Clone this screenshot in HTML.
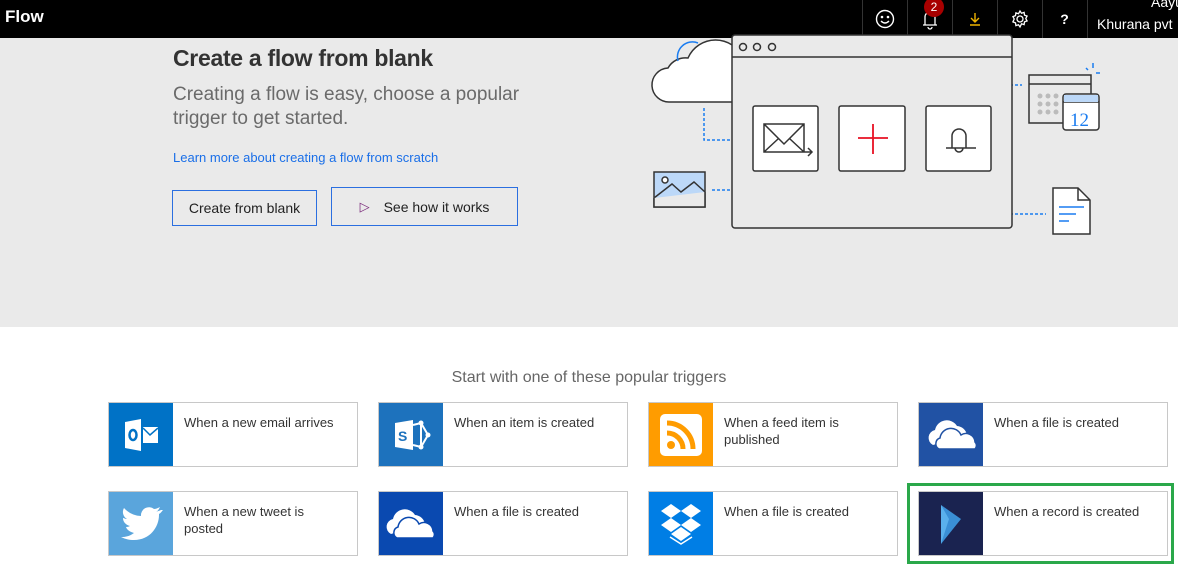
<!DOCTYPE html>
<html><head><meta charset="utf-8"><style>
*{margin:0;padding:0;box-sizing:border-box}
body{width:1178px;height:567px;overflow:hidden;background:#fff;font-family:"Liberation Sans",sans-serif;position:relative;color:#333}
.top{position:absolute;left:0;top:0;width:1178px;height:38px;background:#000;color:#fff}
.logo{position:absolute;left:5px;top:7px;font-size:17px;font-weight:bold}
.sep{position:absolute;top:0;width:1px;height:38px;background:#333}
.ic{position:absolute;top:0;height:38px;width:45px;display:flex;align-items:center;justify-content:center}
.hero{position:absolute;left:0;top:38px;width:1178px;height:289px;background:#eaeaea}
h1{position:absolute;left:173px;top:45px;font-size:23px;font-weight:bold;color:#333;letter-spacing:-0.3px}
.sub{position:absolute;left:173px;top:83px;font-size:19px;color:#6a6a6a;line-height:24px;width:370px}
.lnk{position:absolute;left:173px;top:150px;font-size:13px;color:#1a6fe8}
.btn{position:absolute;border:1px solid #2b6fe0;font-size:14px;color:#222;display:flex;align-items:center;justify-content:center;background:#eaeaea}
.pt{position:absolute;left:0;width:1178px;top:369px;text-align:center;font-size:16px;color:#666}
.tile{position:absolute;width:250px;height:65px;border:1px solid #c8c8c8;background:#fff}
.tile .sq{position:absolute;left:0;top:0;width:64px;height:63px;display:flex;align-items:center;justify-content:center}
.tile .t{position:absolute;left:75px;top:11px;font-size:13px;line-height:17px;color:#333;width:165px}
</style></head><body>
<div class="top">
<div class="logo">Flow</div>
<div class="sep" style="left:862px"></div><div class="sep" style="left:907px"></div><div class="sep" style="left:952px"></div><div class="sep" style="left:997px"></div><div class="sep" style="left:1042px"></div><div class="sep" style="left:1087px"></div>
<div class="ic" style="left:862px"><svg width="20" height="20" viewBox="0 0 20 20" fill="none" stroke="#fff" stroke-width="1.4"><circle cx="10" cy="10" r="8.5"/><circle cx="7" cy="8" r=".6" fill="#fff"/><circle cx="13" cy="8" r=".6" fill="#fff"/><path d="M6 12q4 4 8 0"/></svg></div>
<div class="ic" style="left:907px"><svg width="20" height="22" viewBox="0 0 20 22" fill="none" stroke="#fff" stroke-width="1.3"><path d="M5 17V9a5 5 0 0 1 10 0v8M3 17h14M8 19a2 2 0 0 0 4 0"/></svg><div style="position:absolute;left:17px;top:-3px;width:20px;height:20px;border-radius:50%;background:#a80000;font-size:12px;color:#fff;text-align:center;line-height:20px">2</div></div>
<div class="ic" style="left:952px"><svg width="14" height="16" viewBox="0 0 14 16" fill="none" stroke="#f0b400" stroke-width="1.4"><path d="M7 2v9M3 7l4 4 4-4M2 14h10"/></svg></div>
<div class="ic" style="left:997px"><svg width="20" height="20" viewBox="0 0 20 20" fill="none" stroke="#fff" stroke-width="1.3"><circle cx="10" cy="10" r="3"/><path d="M10 2l1.5 2.2 2.6-.8.4 2.7 2.6 1-1.3 2.4 1.3 2.4-2.6 1-.4 2.7-2.6-.8L10 18l-1.5-2.2-2.6.8-.4-2.7-2.6-1L4.2 10 2.9 7.6l2.6-1 .4-2.7 2.6.8z"/></svg></div>
<div class="ic" style="left:1042px;font-size:14px;font-weight:bold">?</div>
<div style="position:absolute;left:1151px;top:-6px;font-size:14px">Aayu</div>
<div style="position:absolute;left:1097px;top:16px;font-size:14px;white-space:nowrap">Khurana pvt</div>
</div>
<div class="hero"></div>
<h1>Create a flow from blank</h1>
<div class="sub">Creating a flow is easy, choose a popular trigger to get started.</div>
<div class="lnk">Learn more about creating a flow from scratch</div>
<div class="btn" style="left:172px;top:190px;width:145px;height:36px">Create from blank</div>
<div class="btn" style="left:331px;top:187px;width:187px;height:39px"><span style="color:#7a2a7a;margin-right:14px;font-size:13px">▷</span>See how it works</div>
<svg style="position:absolute;left:640px;top:30px" width="480" height="210" viewBox="0 0 480 210" fill="none" stroke="#333" stroke-width="1.5">
<path d="M92 72H30a17 17 0 0 1-2-34 20 20 0 0 1 20-10 30 30 0 0 1 55 0" fill="#fff"/>
<path d="M38 31a15 15 0 0 1 20-18" stroke="#1a7cf0"/>
<g stroke="#1a7cf0" stroke-dasharray="3 2"><path d="M64 78v32h26"/><path d="M72 160h34"/><path d="M360 55h22"/><path d="M360 184h46"/></g>
<rect x="92" y="5" width="280" height="193" rx="3" fill="#eaeaea"/>
<path d="M92 27h280"/><circle cx="103" cy="17" r="3.5"/><circle cx="117" cy="17" r="3.5"/><circle cx="132" cy="17" r="3.5"/>
<rect x="113" y="76" width="65" height="65" rx="2" fill="#fff"/><rect x="199" y="76" width="66" height="65" rx="2" fill="#fff"/><rect x="286" y="76" width="65" height="65" rx="2" fill="#fff"/>
<path d="M124 94h40v28h-40zM124 94l20 20 20-20M124 122l14-13M164 122l-14-13M154 122h18M168 118l4 4-4 4"/>
<path d="M218 108h30M233 94v30" stroke="#e81123" stroke-width="1.8"/>
<path d="M306 118h30M312 118v-12a7 7 0 0 1 14 0v12M315 118a4 4 0 0 0 8 0"/>
<rect x="14" y="142" width="51" height="35" fill="#bcd8f8"/><path d="M14 168l18-14 9 8 13-10 11 10" /><path d="M14 168v9h51v-15" fill="#eaeaea"/><circle cx="25" cy="150" r="3" fill="#fff"/>
<rect x="389" y="45" width="62" height="48" fill="#eaeaea"/><path d="M389 54h62"/>
<g fill="#bbb" stroke="none"><circle cx="400" cy="66" r="2.5"/><circle cx="408" cy="66" r="2.5"/><circle cx="416" cy="66" r="2.5"/><circle cx="400" cy="74" r="2.5"/><circle cx="408" cy="74" r="2.5"/><circle cx="416" cy="74" r="2.5"/><circle cx="400" cy="82" r="2.5"/><circle cx="408" cy="82" r="2.5"/><circle cx="416" cy="82" r="2.5"/></g>
<rect x="423" y="64" width="36" height="36" rx="3" fill="#fff"/><path d="M423 72h36" /><path d="M424 65h34v7h-34z" fill="#bcd8f8" stroke="none"/>
<text x="430" y="96" font-family="Liberation Serif" font-size="19" fill="#1a7cf0" stroke="none">12</text>
<path d="M453 33v5M446 38l2 2M456 43h4" stroke="#1a7cf0"/>
<path d="M413 158h25l12 12v34h-37z" fill="#fff"/><path d="M438 158v12h12"/><path d="M419 177h25M419 184h17M419 191h10" stroke="#1a7cf0"/>
</svg>
<div class="pt">Start with one of these popular triggers</div>

<div class="tile" style="left:108px;top:402px"><div class="sq" style="background:#0072c6"><svg width="40" height="40" viewBox="0 0 40 40"><path d="M4 7l16-3v32L4 33z" fill="#fff"/><ellipse cx="12" cy="20" rx="3.5" ry="5" fill="none" stroke="#0072c6" stroke-width="2.5"/><path d="M22 12h15v16H22z" fill="#fff"/><path d="M22 13l7 7 8-7" fill="none" stroke="#0072c6" stroke-width="1.5"/></svg></div><div class="t">When a new email arrives</div></div>
<div class="tile" style="left:378px;top:402px"><div class="sq" style="background:#1d72bd"><svg width="40" height="40" viewBox="0 0 40 40"><path d="M4 8l18-3v30L4 32z" fill="#fff"/><text x="7" y="26" font-size="14" font-weight="bold" fill="#1d72bd" font-family="Liberation Sans">S</text><path d="M22 10l8-2 7 12-7 12-8-2M30 8v24" fill="none" stroke="#fff" stroke-width="2"/><circle cx="30" cy="8" r="2.5" fill="#fff"/><circle cx="37" cy="20" r="2.5" fill="#fff"/><circle cx="30" cy="32" r="2.5" fill="#fff"/></svg></div><div class="t">When an item is created</div></div>
<div class="tile" style="left:648px;top:402px"><div class="sq" style="background:#ff9c00"><svg width="48" height="48" viewBox="0 0 48 48"><rect x="3" y="3" width="42" height="42" rx="5" fill="#fff"/><circle cx="14" cy="34" r="4" fill="#ff9c00"/><path d="M10 22a16 16 0 0 1 16 16M10 12a26 26 0 0 1 26 26" fill="none" stroke="#ff9c00" stroke-width="5"/></svg></div><div class="t">When a feed item is published</div></div>
<div class="tile" style="left:918px;top:402px"><div class="sq" style="background:#2152a4"><svg width="60" height="40" viewBox="0 0 60 40"><path d="M12 30a8 8 0 0 1 2-15 12 12 0 0 1 22-4 11 11 0 0 1 10 9" fill="#fff"/><path d="M18 34a6 6 0 0 1 1-11 11 11 0 0 1 21-3 9 9 0 0 1 14 7 5 5 0 0 1 0 7z" fill="#fff" stroke="#2152a4" stroke-width="1.5"/></svg></div><div class="t">When a file is created</div></div>

<div class="tile" style="left:108px;top:491px"><div class="sq" style="background:#5aa5dc"><svg width="44" height="40" viewBox="0 0 44 40"><path d="M42 6c-2 1-3 1-5 2 2-1 3-3 4-5-2 1-4 2-6 2A8 8 0 0 0 22 12 24 24 0 0 1 5 4a8 8 0 0 0 3 11c-2 0-3-1-4-1 0 4 3 7 7 8-2 1-3 1-4 1 1 3 4 5 8 6-4 3-8 4-13 4 4 2 8 3 13 3 16 0 25-13 25-25v-1c2-1 3-3 4-4z" fill="#fff"/></svg></div><div class="t" style="width:135px">When a new tweet is posted</div></div>
<div class="tile" style="left:378px;top:491px"><div class="sq" style="background:#0a49b0"><svg width="60" height="40" viewBox="0 0 60 40"><path d="M10 30a8 8 0 0 1 2-15 12 12 0 0 1 22-4 11 11 0 0 1 10 9" fill="#fff"/><path d="M16 34a6 6 0 0 1 1-11 11 11 0 0 1 21-3 9 9 0 0 1 14 7 5 5 0 0 1 0 7z" fill="#fff" stroke="#0a49b0" stroke-width="1.5"/></svg></div><div class="t">When a file is created</div></div>
<div class="tile" style="left:648px;top:491px"><div class="sq" style="background:#007ee5"><svg width="46" height="44" viewBox="0 0 46 44" fill="#fff"><path d="M13 2l10 7-10 7-10-7zM33 2l10 7-10 7-10-7zM3 23l10-7 10 7-10 7zM43 23l-10-7-10 7 10 7zM13 32l10-7 10 7-10 7z"/><path d="M12 35l11 7 11-7" fill="none" stroke="#fff" stroke-width="1.5"/></svg></div><div class="t">When a file is created</div></div>
<div style="position:absolute;left:907px;top:483px;width:267px;height:81px;border:3px solid #2aa84a"></div>
<div class="tile" style="left:918px;top:491px"><div class="sq" style="background:#1a2350"><svg width="40" height="46" viewBox="0 0 40 46"><path d="M10 4l20 14-20 25z" fill="#3a8fd6"/><path d="M10 4l8 14-8 25z" fill="#5ab0ec"/></svg></div><div class="t">When a record is created</div></div>
</body></html>
